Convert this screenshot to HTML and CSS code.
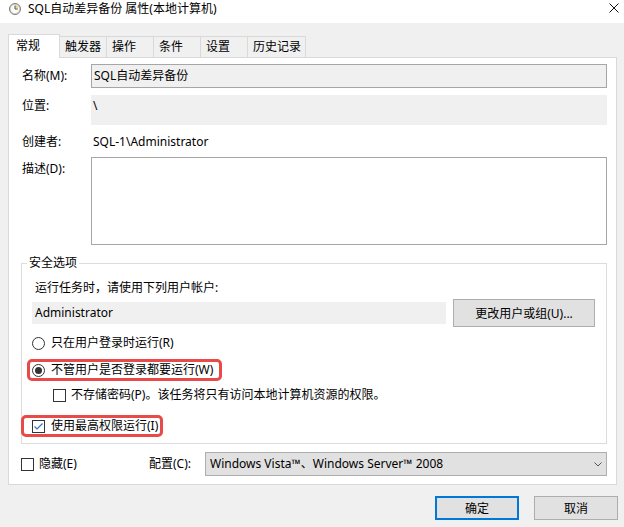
FILE: index.html
```html
<!DOCTYPE html>
<html lang="zh-CN">
<head>
    <meta charset="UTF-8">
    <title>SQL自动差异备份 属性(本地计算机)</title>
    <link rel="stylesheet" href="styles.css">
</head>
<body>
    <div class="titlebar">
        <svg class="app-icon" viewBox="0 0 12 12" width="12" height="12">
            <circle cx="6" cy="6" r="5.5" fill="#d8d8d8" stroke="#7d7d7d"/>
            <circle cx="6" cy="6" r="4" fill="#fbfbfb"/>
            <path d="M6 6 L6 2 A4 4 0 0 1 9.5 4.2 Z" fill="#f3d27a"/>
            <path d="M6 6 V2.6 M6 6 H8.8" stroke="#555" stroke-width="1" fill="none"/>
        </svg>
        <span class="title">SQL自动差异备份 属性(本地计算机)</span>
        <svg class="close" viewBox="0 0 10 10" width="10" height="10">
            <path d="M0.5 0.5 L9.5 9.5 M9.5 0.5 L0.5 9.5" stroke="#111" stroke-width="1"/>
        </svg>
    </div>

    <div class="tabs">
        <div class="tab active">常规</div>
        <div class="tab">触发器</div>
        <div class="tab">操作</div>
        <div class="tab">条件</div>
        <div class="tab">设置</div>
        <div class="tab">历史记录</div>
    </div>

    <div class="panel">
        <div class="field-row name-row">
            <label>名称(M):</label>
            <div class="field readonly">SQL自动差异备份</div>
        </div>
        <div class="field-row loc-row">
            <label>位置:</label>
            <div class="field plain">\</div>
        </div>
        <div class="field-row author-row">
            <label>创建者:</label>
            <div class="value">SQL-1\Administrator</div>
        </div>
        <div class="field-row desc-row">
            <label>描述(D):</label>
            <div class="field textarea"></div>
        </div>

        <fieldset class="security">
            <legend>安全选项</legend>
            <div class="hint">运行任务时，请使用下列用户帐户:</div>
            <div class="account">
                <div class="account-box">Administrator</div>
                <button class="btn change-btn">更改用户或组(U)...</button>
            </div>
            <div class="option radio-first">
                <span class="radio"></span>
                <span>只在用户登录时运行(R)</span>
            </div>
            <div class="option mark mark-radio">
                <span class="radio on"></span>
                <span>不管用户是否登录都要运行(W)</span>
            </div>
            <div class="option sub">
                <span class="check"></span>
                <span>不存储密码(P)。该任务将只有访问本地计算机资源的权限。</span>
            </div>
            <div class="option mark mark-check">
                <span class="check on">
                    <svg viewBox="0 0 11 11" width="11" height="11">
                        <path d="M1.5 5.5 L4 8 L9.5 2.5" stroke="#2b74c9" stroke-width="1.2" fill="none"/>
                    </svg>
                </span>
                <span>使用最高权限运行(I)</span>
            </div>
        </fieldset>

        <div class="bottom-row">
            <div class="option hidden-opt">
                <span class="check"></span>
                <span>隐藏(E)</span>
            </div>
            <label class="config-label">配置(C):</label>
            <div class="combo">
                <span>Windows Vista™、Windows Server™ 2008</span>
                <svg class="chevron" viewBox="0 0 8 5" width="8" height="5">
                    <path d="M0.5 0.5 L4 4 L7.5 0.5" stroke="#555" stroke-width="1" fill="none"/>
                </svg>
            </div>
        </div>
    </div>

    <div class="footer">
        <button class="btn default">确定</button>
        <button class="btn">取消</button>
    </div>
</body>
</html>
```

FILE: styles.css
```css
* {
    margin: 0;
    padding: 0;
    box-sizing: border-box;
}

body {
    width: 624px;
    height: 527px;
    overflow: hidden;
    background-color: #f0f0f0;
    font-family: "Noto Sans", "Noto Sans CJK SC", sans-serif;
    font-size: 12px;
    line-height: 16px;
    color: #000;
}

/* title bar */
.titlebar {
    height: 23px;
    background-color: #fff;
    display: flex;
    align-items: flex-start;
    padding: 1px 0 0 9px;
}

.app-icon {
    margin-top: 2px;
    margin-right: 7px;
    flex: none;
}

.close {
    margin-left: auto;
    margin-right: 5px;
    margin-top: 2px;
}

/* tabs */
.tabs {
    display: flex;
    align-items: flex-end;
    height: 23px;
    margin-top: 11px;
    padding-left: 8px;
}

.tab {
    height: 21px;
    min-width: 47px;
    padding: 0 4px 0 5px;
    border: 1px solid #d9d9d9;
    border-left: none;
    border-bottom: none;
    background-color: #f0f0f0;
    line-height: 20px;
}

.tab.active {
    width: 52px;
    height: 24px;
    margin-bottom: -1px;
    padding-left: 7px;
    border-left: 1px solid #d9d9d9;
    background-color: #fff;
    line-height: 21px;
    position: relative;
    z-index: 1;
}

/* main panel */
.panel {
    width: 609px;
    height: 428px;
    margin-left: 8px;
    padding: 0 9px 0 12px;
    background-color: #fff;
    border: 1px solid #d9d9d9;
}

.field-row {
    display: flex;
}

.field-row label {
    width: 70px;
    flex: none;
    padding-left: 1px;
}

.field {
    flex: 1;
}

.name-row {
    margin-top: 6px;
    align-items: center;
    height: 24px;
}

.field.readonly {
    height: 24px;
    padding: 0 2px;
    border: 1px solid #a6a6a6;
    background-color: #f0f0f0;
    line-height: 22px;
}

.loc-row {
    margin-top: 7px;
}

.loc-row label {
    padding-top: 3px;
}

.field.plain {
    height: 30px;
    padding: 3px 2px 0;
    background-color: #f0f0f0;
}

.author-row {
    margin-top: 9px;
}

.value {
    padding-left: 2px;
}

.desc-row {
    margin-top: 7px;
}

.desc-row label {
    padding-top: 4px;
}

.field.textarea {
    height: 88px;
    border: 1px solid #a6a6a6;
    background-color: #fff;
}

/* security group */
.security {
    margin-top: 10px;
    padding: 9px 10px 6px 13px;
    border: 1px solid #dcdcdc;
    min-width: 0;
}

.security legend {
    margin-left: -8px;
    padding: 0 2px;
    line-height: 16px;
}

.account {
    display: flex;
    align-items: center;
    height: 28px;
    margin-top: 3px;
}

.account-box {
    width: 414px;
    height: 22px;
    margin-left: -3px;
    padding-left: 3px;
    background-color: #f0f0f0;
    line-height: 22px;
}

.btn {
    font-family: inherit;
    font-size: 12px;
    color: #000;
    background-color: #e1e1e1;
    border: 1px solid #adadad;
}

.change-btn {
    width: 142px;
    height: 28px;
    margin-left: 7px;
}

.option {
    display: flex;
    align-items: center;
    gap: 6px;
    height: 16px;
}

.radio-first {
    margin-top: 8px;
    margin-left: -3px;
}

.mark {
    width: max-content;
    height: 22px;
    border: 3px solid #e84a4a;
    border-radius: 5px;
}

.mark-radio {
    margin-top: 8px;
    margin-left: -8px;
    padding: 0 6px 0 2px;
}

.sub {
    margin-top: 6px;
    margin-left: 18px;
    gap: 5px;
}

.mark-check {
    margin-top: 12px;
    margin-left: -14px;
    padding: 0 2px 0 8px;
}

.radio {
    width: 13px;
    height: 13px;
    flex: none;
    border: 1px solid #333;
    border-radius: 50%;
    background-color: #fff;
    display: flex;
    align-items: center;
    justify-content: center;
}

.radio.on::after {
    content: "";
    width: 7px;
    height: 7px;
    border-radius: 50%;
    background-color: #333;
}

.check {
    width: 13px;
    height: 13px;
    flex: none;
    border: 1px solid #333;
    background-color: #fff;
    display: flex;
}

/* bottom row */
.bottom-row {
    display: flex;
    align-items: center;
    height: 24px;
    margin-top: 8px;
}

.hidden-opt {
    width: 128px;
    gap: 5px;
}

.config-label {
    width: 56px;
    flex: none;
}

.combo {
    flex: 1;
    height: 24px;
    display: flex;
    align-items: center;
    justify-content: space-between;
    padding: 0 4px 0 4px;
    background-color: #e1e1e1;
    border: 1px solid #adadad;
}

/* dialog buttons */
.footer {
    display: flex;
    justify-content: flex-end;
    gap: 15px;
    margin-top: 11px;
    padding-right: 6px;
}

.footer .btn {
    width: 84px;
    height: 24px;
}

.footer .default {
    border: 2px solid #0078d7;
}
```
